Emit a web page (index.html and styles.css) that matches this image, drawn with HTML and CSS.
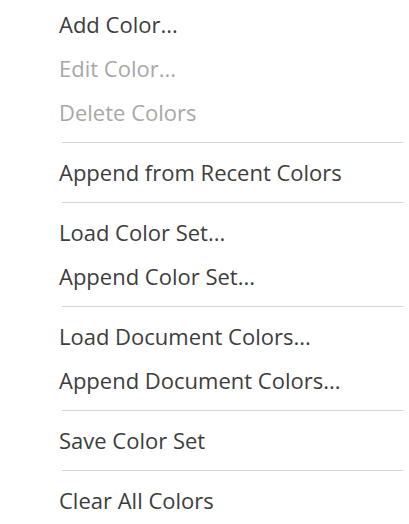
FILE: index.html
```html
<!DOCTYPE html>
<html lang="en">
<head>
    <meta charset="UTF-8">
    <title>Color Menu</title>
    <link rel="stylesheet" href="styles.css">
</head>
<body>
    <div class="menu">
        <div class="menu-item">Add Color...</div>
        <div class="menu-item disabled">Edit Color...</div>
        <div class="menu-item disabled">Delete Colors</div>
        <div class="separator"></div>
        <div class="menu-item">Append from Recent Colors</div>
        <div class="separator"></div>
        <div class="menu-item">Load Color Set...</div>
        <div class="menu-item">Append Color Set...</div>
        <div class="separator"></div>
        <div class="menu-item">Load Document Colors...</div>
        <div class="menu-item">Append Document Colors...</div>
        <div class="separator"></div>
        <div class="menu-item">Save Color Set</div>
        <div class="separator"></div>
        <div class="menu-item">Clear All Colors</div>
    </div>
</body>
</html>
```

FILE: styles.css
```css
body {
    margin: 0;
    background-color: #fff;
    font-family: "Open Sans", "Noto Sans", sans-serif;
}

.menu {
    padding-top: 3px;
    height: 521px;
    background-color: #fff;
}

.menu-item {
    height: 42px;
    line-height: 42px;
    padding-bottom: 2px;
    padding-left: 59px;
    font-size: 22px;
    color: #3d3d3d;
    white-space: nowrap;
    cursor: default;
}

.menu-item.disabled {
    color: #a8a8a8;
}

.separator {
    height: 1px;
    margin: 7px 6px 8px 62px;
    background-color: #d4d4d4;
}
```
